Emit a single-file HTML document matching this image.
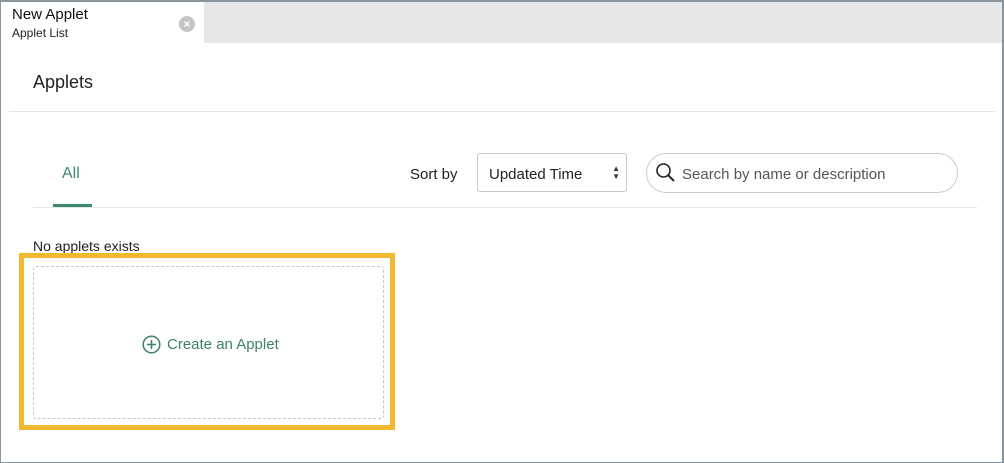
<!DOCTYPE html>
<html><head><meta charset="utf-8"><style>
*{box-sizing:border-box;margin:0;padding:0}
body{width:1004px;height:463px;background:#fff;font-family:"Liberation Sans",sans-serif;position:relative;overflow:hidden;color:#222}
.frame{position:absolute;left:0;top:0;width:1004px;height:463px;border:1px solid #8a949c;border-top:2px solid #8a949c;border-right:2px solid #8a949c}
.tabbar{position:absolute;left:204px;top:2px;right:2px;height:41px;background:#e5e6e8}
.t1{position:absolute;left:12px;top:6px;font-size:15px;color:#111}
.t2{position:absolute;left:12px;top:26px;font-size:12px;color:#222}
.x{position:absolute;left:179px;top:16px;width:16px;height:16px;border-radius:50%;background:#c3c4c6;color:#fff;font-size:12px;line-height:16px;text-align:center;font-weight:bold}
.h{position:absolute;left:33px;top:72px;font-size:18px;color:#222}
.l1{position:absolute;left:9px;right:9px;top:111px;height:1px;background:#e3e3e3}
.all{position:absolute;left:62px;top:165px;font-size:16px;color:#3d8a72}
.ul{position:absolute;left:53px;top:204px;width:39px;height:3px;background:#3d8a72}
.l2{position:absolute;left:33px;right:27px;top:207px;height:1px;background:#e6e6e6}
.sb{position:absolute;left:410px;top:166px;font-size:15px;color:#222}
.sel{position:absolute;left:477px;top:153px;width:150px;height:39px;border:1px solid #c8c8c8;border-radius:3px;font-size:15px;padding:12px 0 0 11px;color:#222}
.arr{position:absolute;right:6px;top:11px;font-size:8px;line-height:8px;color:#333}
.srch{position:absolute;left:646px;top:153px;width:312px;height:40px;border:1px solid #ccc;border-radius:20px;font-size:15px;color:#555;padding:12px 0 0 35px}
.nae{position:absolute;left:33px;top:238px;font-size:14px;color:#222}
.yel{position:absolute;left:19px;top:253px;width:376px;height:177px;border:5px solid #f0b92e}
.dash{position:absolute;left:33px;top:266px;width:351px;height:153px;border:1px dashed #c8c8c8;border-radius:3px}
.cr{position:absolute;left:142px;top:335px;font-size:15px;color:#3d7f6d;display:flex;align-items:center;gap:6px;font-weight:500}
</style></head><body>
<div class="tabbar"></div>
<div class="t1">New Applet</div>
<div class="t2">Applet List</div>
<div class="x">×</div>
<div class="h">Applets</div>
<div class="l1"></div>
<div class="all">All</div>
<div class="l2"></div>
<div class="ul"></div>
<div class="sb">Sort by</div>
<div class="sel">Updated Time<div class="arr">▲<br>▼</div></div>
<div class="srch"><svg style="position:absolute;left:8px;top:8px" width="22" height="22" viewBox="0 0 22 22"><circle cx="8.5" cy="8.5" r="6.5" fill="none" stroke="#222" stroke-width="1.6"/><path d="M13.3 13.3L19 19" stroke="#222" stroke-width="2"/></svg>Search by name or description</div>
<div class="nae">No applets exists</div>
<div class="yel"></div>
<div class="dash"></div>
<div class="cr"><svg width="19" height="19" viewBox="0 0 19 19"><circle cx="9.5" cy="9.5" r="8.3" fill="none" stroke="#3d7f6d" stroke-width="1.5"/><path d="M9.5 5v9M5 9.5h9" stroke="#3d7f6d" stroke-width="1.6"/></svg>Create an Applet</div>
<div class="frame"></div>
</body></html>
